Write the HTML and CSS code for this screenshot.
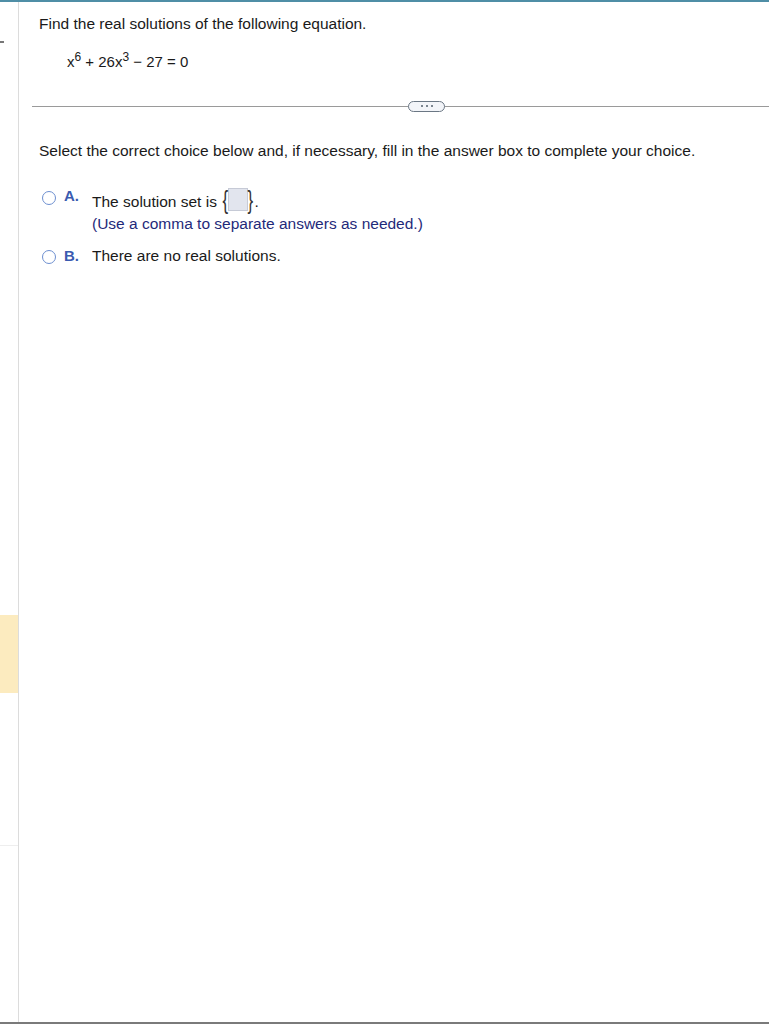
FILE: index.html
```html
<!DOCTYPE html>
<html>
<head>
<meta charset="utf-8">
<link rel="stylesheet" href="styles.css">
</head>
<body>
<div class="topbar"></div>
<div class="page">
  <aside class="gutter">
    <div class="tick"></div>
    <div class="hilite"></div>
    <div class="faint"></div>
  </aside>
  <main class="main">
    <p class="prompt">Find the real solutions of the following equation.</p>
    <p class="equation">x<sup>6</sup> + 26x<sup>3</sup> &minus; 27 = 0</p>
    <div class="divider">
      <span class="pill"><i></i><i></i><i></i></span>
    </div>
    <p class="instr">Select the correct choice below and, if necessary, fill in the answer box to complete your choice.</p>
    <div class="choices">
      <div class="choice choice-a">
        <span class="radio"></span>
        <span class="letter">A.</span>
        <div class="body">
          <div class="line">The solution set is <span class="set"><span class="brace">{</span><span class="box"></span><span class="brace">}</span></span>.</div>
          <div class="hint">(Use a comma to separate answers as needed.)</div>
        </div>
      </div>
      <div class="choice choice-b">
        <span class="radio"></span>
        <span class="letter">B.</span>
        <div class="body">
          <div class="line">There are no real solutions.</div>
        </div>
      </div>
    </div>
  </main>
</div>
<div class="bottombar"></div>
</body>
</html>
```

FILE: styles.css
```css
html, body {
  margin: 0;
  padding: 0;
  background: #fff;
  font-family: "Liberation Sans", Arial, sans-serif;
  color: #1a1a1a;
}
.topbar {
  height: 2px;
  background: #4f8ea6;
}
.page {
  display: flex;
  height: 1020px;
}
.gutter {
  width: 18px;
  flex: none;
  border-right: 1px solid #dcdcdc;
  position: relative;
}
.tick {
  position: absolute;
  left: 0;
  top: 39px;
  width: 4px;
  height: 2px;
  background: #777;
}
.hilite {
  position: absolute;
  left: 0;
  top: 613px;
  width: 18px;
  height: 78px;
  background: #fcebbf;
}
.faint {
  position: absolute;
  left: 0;
  top: 843px;
  width: 18px;
  height: 1px;
  background: #eee;
}
.main {
  flex: 1;
  padding-left: 20px;
}
.prompt {
  margin: 12px 0 0;
  font-size: 15.5px;
  line-height: 20px;
}
.equation {
  margin: 18px 0 0 28px;
  font-size: 15px;
  line-height: 20px;
}
.equation sup {
  font-size: 12px;
  vertical-align: 6px;
  line-height: 0;
}
.divider {
  margin: 29px 0 0 -7px;
  height: 10px;
  display: flex;
  align-items: center;
  justify-content: center;
  position: relative;
}
.divider::before {
  content: "";
  position: absolute;
  left: 0;
  right: 0;
  top: 5px;
  height: 1px;
  background: #9a9a9a;
}
.pill {
  position: relative;
  width: 35px;
  height: 9px;
  border: 1px solid #6b7784;
  border-radius: 6px;
  background: #f3f5f9;
  display: flex;
  align-items: center;
  justify-content: center;
  gap: 3px;
  margin-left: 52px;
}
.pill i {
  width: 2px;
  height: 2px;
  background: #55606c;
  border-radius: 1px;
}
.instr {
  margin: 30px 0 0;
  font-size: 15.5px;
  line-height: 20px;
}
.choices {
  margin-top: 25px;
  display: flex;
  flex-direction: column;
  gap: 10px;
}
.choice {
  display: flex;
  align-items: flex-start;
  font-size: 15.5px;
  line-height: 22px;
}
.radio {
  flex: none;
  width: 12px;
  height: 12px;
  border: 1.5px solid #6d8fd0;
  border-radius: 50%;
  margin: 5px 0 0 3px;
}
.letter {
  flex: none;
  width: 28px;
  margin-left: 8px;
  font-weight: bold;
  color: #3a5bb0;
  font-size: 15px;
}
.choice-a .letter {
  margin-top: -1px;
}
.choice-a .body {
  padding-top: 5px;
}
.set {
  display: inline-flex;
  align-items: center;
  vertical-align: middle;
  margin-top: -6px;
}
.brace {
  font-size: 26px;
  line-height: 22px;
  font-weight: 300;
  color: #333;
  transform: scaleX(0.65);
}
.box {
  width: 18px;
  height: 21px;
  background: #e2e5ee;
  border: 1px solid #c6cad6;
  margin: 0 -2px;
}
.hint {
  color: #1f2a7a;
}
.bottombar {
  height: 2px;
  background: #7a7a7a;
}
```
